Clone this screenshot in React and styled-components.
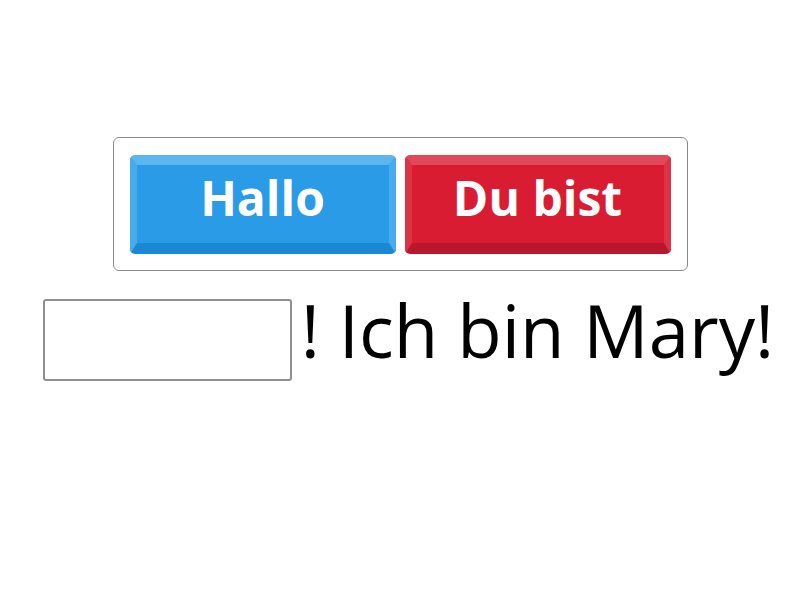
import React from "react"
import styled, { createGlobalStyle } from "styled-components"

const GlobalStyle = createGlobalStyle`
  html, body {
    margin: 0;
    padding: 0;
    background: #fff;
    font-family: "Open Sans", "Liberation Sans", sans-serif;
  }
`

const Page = styled.div`
  width: 800px;
  height: 600px;
  display: flex;
  flex-direction: column;
  align-items: center;
  padding-top: 137px;
  box-sizing: border-box;
`

const Tray = styled.div`
  width: 575px;
  height: 134px;
  box-sizing: border-box;
  border: 1.5px solid #8a8a8a;
  border-radius: 6px;
  display: flex;
  align-items: center;
  justify-content: center;
  gap: 9px;
`

const palette = {
  blue: { main: "#2a9be6", top: "#5cb6ef", side: "#47abec", bottom: "#1b88d3" },
  red: { main: "#d91c32", top: "#e1485a", side: "#dd3346", bottom: "#b8182b" },
}

const Tile = styled.div`
  width: 266px;
  height: 99px;
  box-sizing: border-box;
  border-radius: 5px;
  border-style: solid;
  border-width: 10px 7px 11px 7px;
  border-color: ${p => palette[p.tone].top} ${p => palette[p.tone].side}
    ${p => palette[p.tone].bottom} ${p => palette[p.tone].side};
  background: ${p => palette[p.tone].main};
  color: #fff;
  font-weight: 700;
  font-size: 48px;
  line-height: 1;
  padding-bottom: 12px;
  display: flex;
  align-items: center;
  justify-content: center;
`

const Sentence = styled.div`
  display: flex;
  align-items: center;
  margin-top: 23px;
  margin-left: 17px;
`

const Blank = styled.div`
  width: 249px;
  height: 82px;
  box-sizing: border-box;
  border: 2px solid #8f8f8f;
  border-radius: 3px;
`

const Words = styled.span`
  font-size: 72.6px;
  color: #000;
  margin-left: 9px;
  line-height: 1;
  padding-bottom: 20px;
`

export default function App() {
  return (
    <>
      <GlobalStyle />
      <Page>
        <Tray>
          <Tile tone="blue">Hallo</Tile>
          <Tile tone="red">Du bist</Tile>
        </Tray>
        <Sentence>
          <Blank />
          <Words>! Ich bin Mary!</Words>
        </Sentence>
      </Page>
    </>
  )
}
